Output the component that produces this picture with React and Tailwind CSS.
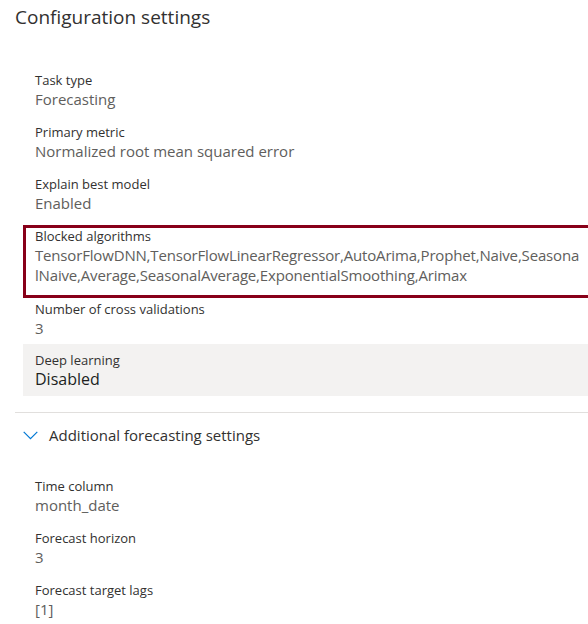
const font = "font-['Segoe_UI','Open_Sans',sans-serif]"

function Field({ label, value, strong }) {
  return (
    <div className="flex flex-col">
      <div className="text-[13px] leading-[18px] text-[#323130]">{label}</div>
      <div className={strong ? 'text-[16px] leading-[21px] text-[#201f1e]' : 'text-[15px] leading-[20px] text-[#605e5c]'}>
        {value}
      </div>
    </div>
  )
}

export default function App() {
  return (
    <div className={`${font} w-[588px] h-[624px] overflow-hidden bg-white pl-[15px]`}>
      <h1 className="pt-[3px] text-[19px] leading-[28px] text-[#323130]">Configuration settings</h1>

      <div className="pt-[40px] pl-[8px]">
        <div className="flex flex-col gap-[14px] pl-[12px]">
          <Field label="Task type" value="Forecasting" />
          <Field label="Primary metric" value="Normalized root mean squared error" />
          <Field label="Explain best model" value="Enabled" />
          <div className="relative pb-[1px]">
            <Field
              label="Blocked algorithms"
              value={
                <span className="whitespace-nowrap tracking-[-0.17px]">
                  TensorFlowDNN,TensorFlowLinearRegressor,AutoArima,Prophet,Naive,Seasona
                  <br />
                  lNaive,Average,SeasonalAverage,ExponentialSmoothing,Arimax
                </span>
              }
            />
            <div className="absolute left-[-12px] top-[-2px] w-[568px] h-[73px] border-[3px] border-[#880019] pointer-events-none" />
          </div>
          <Field label="Number of cross validations" value="3" />
        </div>

        <div className="mt-[6px] bg-[#f3f2f1] pl-[12px] pt-[7px] h-[52px]">
          <Field label="Deep learning" value="Disabled" strong />
        </div>
      </div>

      <div className="mt-[16px] border-t border-[#e1dfdd]" />

      <div className="flex items-center gap-[11px] pl-[8px] h-[44px]">
        <svg width="15" height="9" viewBox="0 0 15 9" fill="none" className="mt-[1px]">
          <path d="M0.7 0.8 L7.5 7.6 L14.3 0.8" stroke="#0078d4" strokeWidth="1.2" />
        </svg>
        <span className="text-[15px] text-[#323130]">Additional forecasting settings</span>
      </div>

      <div className="pt-[20px] pl-[20px] flex flex-col gap-[14px]">
        <Field label="Time column" value="month_date" />
        <Field label="Forecast horizon" value="3" />
        <Field label="Forecast target lags" value="[1]" />
      </div>
    </div>
  )
}
